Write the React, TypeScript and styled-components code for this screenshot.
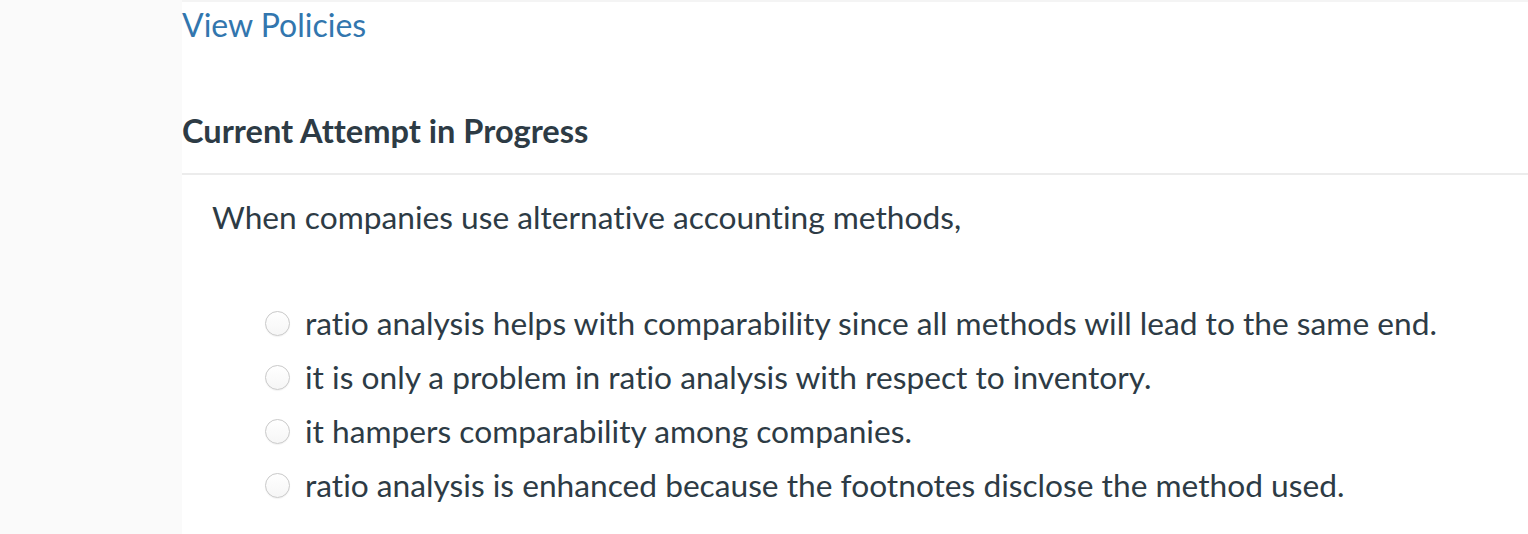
import React from 'react';
import styled, { createGlobalStyle } from 'styled-components';

const GlobalStyle = createGlobalStyle`
  html, body {
    margin: 0;
    padding: 0;
    background: #ffffff;
  }
  body {
    font-family: Lato, "Open Sans", "Liberation Sans", sans-serif;
    font-variant-ligatures: none;
    color: #2d3b45;
  }
`;

const Page = styled.div`
  display: flex;
  min-height: 534px;
`;

const Sidebar = styled.aside`
  width: 182px;
  flex-shrink: 0;
  background: #fafafa;
`;

const Main = styled.main`
  flex: 1;
  border-top: 2px solid #f4f4f4;
`;

const PolicyLink = styled.a`
  display: block;
  padding-top: 4px;
  font-size: 32px;
  line-height: 38px;
  color: #3276ae;
  text-decoration: none;
`;

const Heading = styled.h2`
  margin: 68px 0 0;
  font-size: 32.6px;
  font-weight: 700;
  line-height: 38px;
  color: #2d3b45;
`;

const Divider = styled.hr`
  margin: 23px 0 0;
  border: 0;
  height: 2px;
  background: #ececec;
`;

const Question = styled.div`
  padding: 0 30px;
`;

const Prompt = styled.p`
  margin: 23px 0 0;
  font-size: 31.7px;
  line-height: 38px;
`;

const Options = styled.ul`
  list-style: none;
  margin: 68px 0 0;
  padding: 0 0 0 53px;
  display: flex;
  flex-direction: column;
  gap: 16px;
`;

const Option = styled.li`
  display: flex;
  align-items: center;
  gap: 15px;
  font-size: 31.7px;
  line-height: 38px;
`;

const Radio = styled.span`
  width: 23px;
  height: 23px;
  border-radius: 50%;
  border: 1px solid #c9c9c9;
  background: linear-gradient(#ffffff, #f6f6f6);
  box-shadow: 0 1px 1px rgba(0, 0, 0, 0.05);
  flex-shrink: 0;
`;

const answers = [
  'ratio analysis helps with comparability since all methods will lead to the same end.',
  'it is only a problem in ratio analysis with respect to inventory.',
  'it hampers comparability among companies.',
  'ratio analysis is enhanced because the footnotes disclose the method used.',
];

export default function App() {
  return (
    <>
      <GlobalStyle />
      <Page>
        <Sidebar />
        <Main>
          <PolicyLink href="#">View Policies</PolicyLink>
          <Heading>Current Attempt in Progress</Heading>
          <Divider />
          <Question>
            <Prompt>When companies use alternative accounting methods,</Prompt>
            <Options>
              {answers.map((a) => (
                <Option key={a}>
                  <Radio />
                  <span>{a}</span>
                </Option>
              ))}
            </Options>
          </Question>
        </Main>
      </Page>
    </>
  );
}
